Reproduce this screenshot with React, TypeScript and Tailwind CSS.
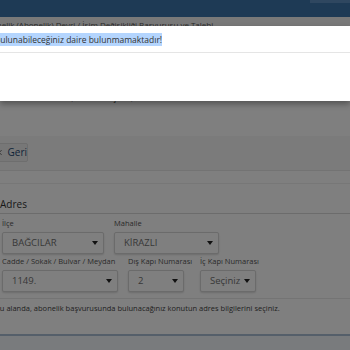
import { ChevronLeft } from 'lucide-react'

const font = { fontFamily: '"Open Sans", "Liberation Sans", sans-serif' }

function Select({ label, value, width }: { label: string; value: string; width: string }) {
  return (
    <div className={`flex flex-col ${width}`}>
      <span className="text-[7.5px] leading-[10px] text-[#555] h-[14px] whitespace-nowrap">{label}</span>
      <div className="h-[22px] flex items-center justify-between pl-[9px] pr-[5px] border border-[#d6d6d6] rounded-[2px] bg-white shadow-[0_1px_2px_rgba(0,0,0,0.15)]">
        <span className="text-[9.5px] text-[#707070] whitespace-nowrap">{value}</span>
        <span className="w-0 h-0 border-l-[3px] border-r-[3px] border-t-[4px] border-l-transparent border-r-transparent border-t-[#222]" />
      </div>
    </div>
  )
}

export default function App() {
  return (
    <div className="relative w-[350px] h-[350px] overflow-hidden bg-white" style={font}>
      {/* page underneath */}
      <div className="flex flex-col h-full">
        <div className="h-[17px] bg-[#3d74aa] flex justify-end">
          <div className="w-[40px] h-[3px] bg-[#5e8fc0]" />
        </div>
        <div className="h-[9px] bg-[#f2f2f2] overflow-hidden">
          <p className="text-[8px] leading-[10px] mt-[3px] text-[#555] whitespace-nowrap -ml-[18px]">
            Abonelik (Abonelik) Devri / İsim Değişikliği Başvurusu ve Talebi
          </p>
        </div>
        <div className="h-[110px] pl-[70px] pt-[64px]">
          <p className="text-[10px] leading-[12px] text-[#444]">(Daire Seçimi)</p>
        </div>
        <div className="h-[35px] pt-[7px] bg-[#f6f6f6] border-b border-[#e6e6e6]">
          <div className="w-[34px] h-[19px] -ml-[6px] flex items-center gap-[3px] pl-[1px] border border-[#dcdcdc] bg-[#eeeeee] rounded-[2px]">
            <ChevronLeft className="w-[9px] h-[9px] text-[#333]" strokeWidth={2} />
            <span className="text-[10px] text-[#1f4a75]">Geri</span>
          </div>
        </div>
        <div className="h-[13px] border-b border-[#efefef]" />
        <div className="h-[30px] flex items-end pb-[2px] border-b border-[#d8d8d8]">
          <span className="text-[10px] leading-[14px] text-[#333] -ml-[3px]">›Adres</span>
        </div>
        <div className="flex flex-col pl-[2px] pt-[4px] gap-[2px]">
          <div className="flex gap-[10px]">
            <Select label="İlçe" value="BAĞCILAR" width="w-[102px]" />
            <Select label="Mahalle" value="KİRAZLI" width="w-[105px]" />
          </div>
          <div className="flex">
            <Select label="Cadde / Sokak / Bulvar / Meydan" value="1149." width="w-[116px]" />
            <div className="w-[10px]" />
            <Select label="Dış Kapı Numarası" value="2" width="w-[56px]" />
            <div className="w-[16px]" />
            <Select label="İç Kapı Numarası" value="Seçiniz" width="w-[56px]" />
          </div>
        </div>
        <div className="mt-[6px] border-t border-[#e8e8e8] pt-[3px]">
          <p className="text-[7.5px] leading-[12px] text-[#444] whitespace-nowrap -ml-[5px]">
            Bu alanda, abonelik başvurusunda bulunacağınız konutun adres bilgilerini seçiniz.
          </p>
        </div>
        <div className="flex-1 mt-[20px] border-t-2 border-[#aabfd4] bg-[#f2f6fa]" />
      </div>

      {/* overlay */}
      <div className="absolute inset-0 bg-black/50" />

      {/* modal */}
      <div className="absolute left-0 right-0 top-[26px] h-[75px] bg-white shadow-[0_3px_6px_rgba(0,0,0,0.35)]">
        <div className="h-[27px] flex items-center border-b border-[#e5e5e5] overflow-hidden">
          <span className="text-[8.5px] leading-[13px] text-[#333] whitespace-nowrap -ml-[5px] bg-[#b4d5fe]">
            bulunabileceğiniz daire bulunmamaktadır!
          </span>
        </div>
      </div>
    </div>
  )
}
